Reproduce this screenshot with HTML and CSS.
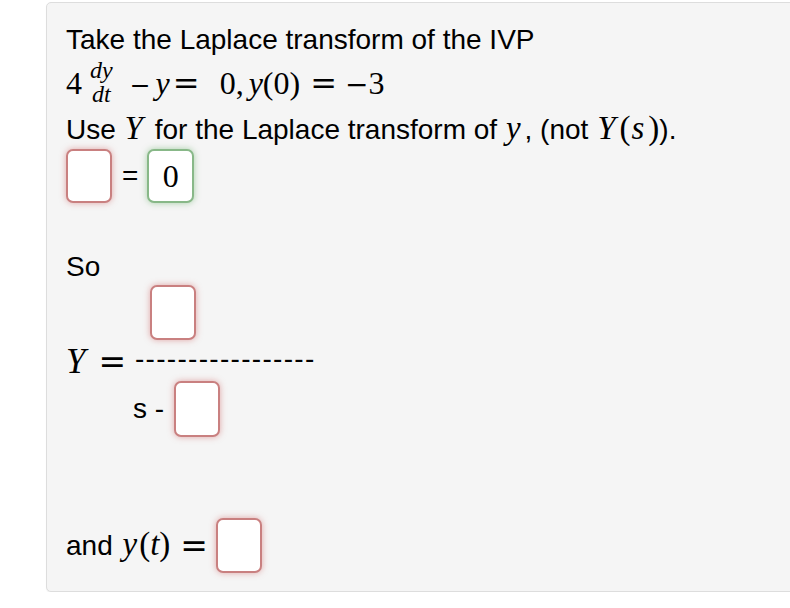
FILE: index.html
```html
<!DOCTYPE html>
<html>
<head>
<meta charset="utf-8">
<link rel="stylesheet" href="styles.css">
</head>
<body>
<div class="panel">
  <p class="line">Take the Laplace transform of the IVP</p>
  <div class="mathline"><span class="mr">4</span><span class="frac"><span class="fn">dy</span><span class="fd">dt</span></span><span class="mo minus first-minus m1">−</span><span class="mi m2">y</span><span class="mo m3">=</span><span class="mr m4">0,</span><span class="mi m5">y</span><span class="mr">(0)</span><span class="mo m6">=</span><span class="mo minus m7">−</span><span class="mr">3</span></div>
  <p class="line">Use <span class="mi ic">Y</span> for the Laplace transform of <span class="mi ic">y</span>, (not <span class="mi ic">Y</span><span class="mr">(</span><span class="mi ic">s</span><span class="mr">)</span>).</p>
  <div class="row first">
    <span class="box red"></span><span class="eq">=</span><span class="box green">0</span>
  </div>
  <p class="line so">So</p>
  <div class="fblock">
    <div class="lhs"><span class="mi big">Y</span><span class="mo">=</span></div>
    <div class="fcol">
      <div class="numer"><span class="box red"></span></div>
      <div class="dashes">-----------------</div>
      <div class="denom"><span class="stext">s -</span><span class="box red"></span></div>
    </div>
  </div>
  <div class="row androw">
    <span class="atext">and <span class="mi ay">y</span><span class="mr">(</span><span class="mi">t</span><span class="mr">)</span></span><span class="mo aeq">=</span><span class="box red"></span>
  </div>
</div>
</body>
</html>
```
FILE: styles.css
```css
html, body {
  margin: 0;
  padding: 0;
  overflow: hidden;
  background: #ffffff;
}
body {
  font-family: "Liberation Sans", Arial, sans-serif;
  color: #000;
}
.panel {
  box-sizing: border-box;
  margin: 2px 0 0 46px;
  width: 770px;
  height: 590px;
  border: 1px solid #dddddd;
  border-radius: 5px;
  background: #f5f5f5;
  box-shadow: 0 1px 1px rgba(0, 0, 0, 0.06);
  padding: 17px 19px 0;
}
.line {
  margin: 0;
  font-size: 28px;
  line-height: 40px;
}
.mi {
  font-family: "Liberation Serif", "Times New Roman", serif;
  font-style: italic;
  font-size: 33px;
  line-height: 1;
}
.mi.ic { padding: 0 4px 0 1px; }
.mr {
  font-family: "Liberation Serif", "Times New Roman", serif;
  font-size: 33px;
  line-height: 1;
}
.mo {
  font-family: "DejaVu Serif", serif;
  font-size: 32px;
  line-height: 1;
}
.mathline {
  font-family: "Liberation Serif", serif;
  font-size: 32px;
  line-height: 46px;
  height: 50px;
  white-space: nowrap;
}
.mathline .mr, .mathline .mi { font-size: 32px; }
.mathline .mo { font-size: 32px; }
.mathline .mo.minus { font-size: 28px; }
.mathline .mo.first-minus { font-size: 25px; }
.m1 { margin-left: 17px; }
.m2 { margin-left: 5px; }
.m3 { margin-left: 3px; }
.m4 { margin-left: 20px; }
.m5 { margin-left: 5px; }
.m6 { margin-left: 10px; }
.m7 { margin-left: 8px; }
.frac {
  display: inline-flex;
  flex-direction: column;
  align-items: center;
  vertical-align: 16px;
  margin: 0 0 0 8px;
  font-family: "Liberation Serif", serif;
  font-style: italic;
  font-size: 24px;
}
.fn { line-height: 20px; }
.fd { line-height: 28px; }
.row {
  display: flex;
  align-items: center;
}
.row.first { margin-top: -1px; }
.box {
  box-sizing: border-box;
  display: inline-flex;
  align-items: center;
  justify-content: center;
  width: 46px;
  height: 54px;
  background: #ffffff;
  border-radius: 7px;
  font-family: "Liberation Serif", serif;
  font-size: 32px;
}
.box.red {
  border: 2px solid #c98080;
  box-shadow: 0 0 6px rgba(205, 90, 90, 0.5);
}
.box.green {
  width: 47px;
  border: 2px solid #88b888;
  box-shadow: 0 0 6px rgba(90, 170, 90, 0.5);
}
.eq {
  font-size: 28px;
  margin: 0 9px 0 10px;
}
.so { margin-top: 44px; }
.fblock {
  display: flex;
  align-items: center;
  margin-top: -2px;
}
.lhs {
  display: flex;
  align-items: baseline;
  gap: 11px;
  width: 67px;
  line-height: 40px;
}
.lhs .big { font-size: 35px; padding-right: 2px; }
.lhs .mo { font-size: 33px; }
.fcol {
  display: flex;
  flex-direction: column;
}
.numer { padding-left: 17px; height: 55px; }
.numer .box { height: 55px; }
.dashes {
  font-size: 28px;
  line-height: 41px;
  height: 41px;
  letter-spacing: 1.3px;
  padding-left: 2px;
  margin-top: -2px;
}
.denom {
  display: flex;
  align-items: center;
  margin-top: 2px;
}
.denom .box { height: 56px; margin-left: 10px; }
.stext { font-size: 28px; }
.androw { margin-top: 81px; }
.atext { font-size: 28px; line-height: 40px; }
.atext .ay { margin-left: 2px; padding-right: 2px; }
.aeq { font-size: 33px; margin: 0 8px 0 10px; }
.androw .box { height: 55px; }
```
